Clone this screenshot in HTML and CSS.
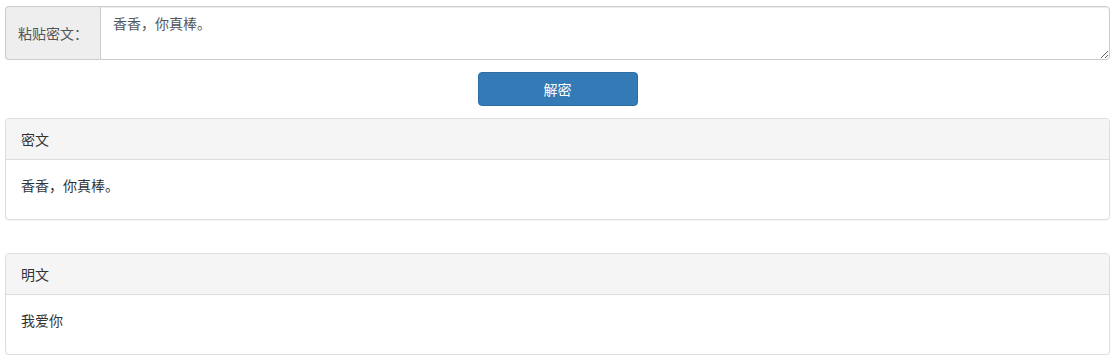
FILE: index.html
```html
<!DOCTYPE html>
<html lang="zh">
<head>
<meta charset="utf-8">
<title>解密</title>
<link rel="stylesheet" href="styles.css">
</head>
<body>
<div class="container">
  <div class="input-group">
    <span class="addon">粘贴密文：</span>
    <textarea class="field" rows="2">香香，你真棒。</textarea>
  </div>
  <div class="actions">
    <button class="btn" type="button">解密</button>
  </div>
  <div class="panel">
    <div class="panel-heading">密文</div>
    <div class="panel-body">香香，你真棒。</div>
  </div>
  <div class="panel">
    <div class="panel-heading">明文</div>
    <div class="panel-body">我爱你</div>
  </div>
</div>
</body>
</html>
```
FILE: styles.css
```css
* { box-sizing: border-box; }
html, body { margin: 0; background: #fff; }
body {
  font-family: "Noto Sans CJK SC", "Liberation Sans", sans-serif;
  font-size: 14px;
  line-height: 20px;
  color: #333;
}
.container { padding: 6px 9px 0 5px; }
.input-group { display: flex; }
.addon {
  display: flex;
  align-items: center;
  padding: 6px 12px;
  background: #eee;
  color: #555;
  border: 1px solid #ccc;
  border-right: 0;
  border-radius: 4px 0 0 4px;
  white-space: nowrap;
}
.field {
  flex: 1;
  height: 54px;
  padding: 6px 12px;
  font: inherit;
  color: #555;
  border: 1px solid #ccc;
  border-radius: 0 4px 4px 0;
  box-shadow: inset 0 1px 1px rgba(0,0,0,.075);
  resize: vertical;
  margin: 0;
}
.actions { display: flex; justify-content: center; margin: 12px 0; }
.btn {
  width: 160px;
  height: 34px;
  font: inherit;
  color: #fff;
  background: #337ab7;
  border: 1px solid #2e6da4;
  border-radius: 4px;
  padding: 6px 12px;
}
.panel {
  border: 1px solid #ddd;
  border-radius: 4px;
  margin-bottom: 33px;
  box-shadow: 0 1px 1px rgba(0,0,0,.05);
}
.panel:last-child { margin-bottom: 0; }
.panel-heading {
  padding: 10px 15px;
  background: #f5f5f5;
  border-bottom: 1px solid #ddd;
  border-radius: 3px 3px 0 0;
}
.panel-body { padding: 15px 15px 24px; }
```
